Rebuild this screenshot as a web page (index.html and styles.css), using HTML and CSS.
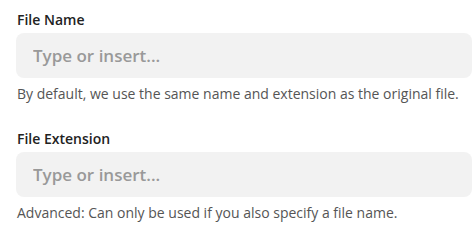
FILE: index.html
```html
<!DOCTYPE html>
<html lang="en">
<head>
    <meta charset="UTF-8">
    <meta name="viewport" content="width=device-width, initial-scale=1.0">
    <title>File options</title>
    <link rel="stylesheet" href="styles.css">
</head>
<body>
    <div class="form">
        <!-- 文件名 -->
        <div class="field">
            <label class="label" for="fileName">File Name</label>
            <input class="input" id="fileName" type="text" placeholder="Type or insert...">
            <p class="help">By default, we use the same name and extension as the original file.</p>
        </div>
        <!-- 扩展名 -->
        <div class="field">
            <label class="label" for="fileExt">File Extension</label>
            <input class="input" id="fileExt" type="text" placeholder="Type or insert...">
            <p class="help">Advanced: Can only be used if you also specify a file name.</p>
        </div>
    </div>
</body>
</html>
```

FILE: styles.css
```css
* {
  margin: 0;
  padding: 0;
  box-sizing: border-box;
}
body {
  background: #fff;
  font-family: "Open Sans", "Liberation Sans", sans-serif;
}
.form {
  padding: 10px 2px 0 16px;
}
.field {
  display: flex;
  flex-direction: column;
  margin-bottom: 25px;
}
.label {
  font-size: 14px;
  font-weight: 600;
  color: #222;
  line-height: 20px;
  padding-left: 1px;
}
.input {
  margin-top: 3px;
  height: 45px;
  width: 100%;
  border: none;
  outline: none;
  border-radius: 8px;
  background: #f2f2f2;
  padding-left: 17px;
  font: 600 17px "Open Sans", "Liberation Sans", sans-serif;
  color: #333;
}
.input::placeholder {
  color: #999;
}
.help {
  margin-top: 6px;
  font-size: 14px;
  line-height: 20px;
  color: #555;
  padding-left: 1px;
}
```
